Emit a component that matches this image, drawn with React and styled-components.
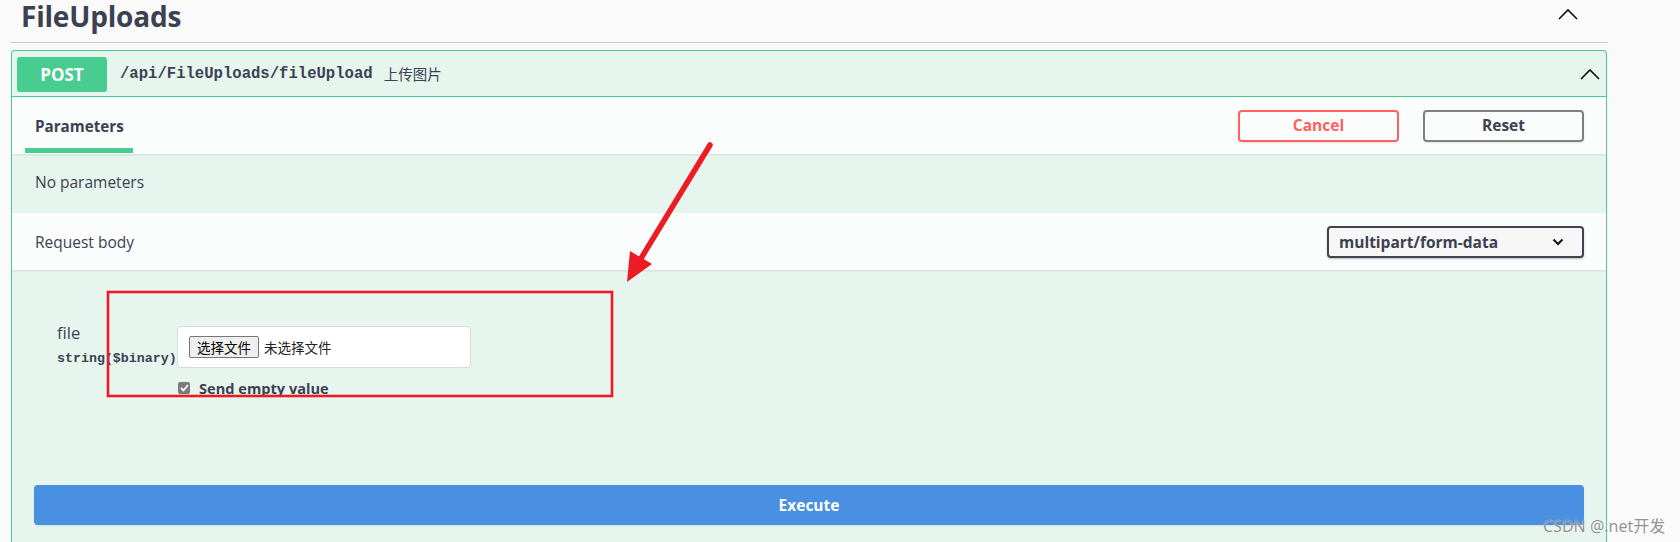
import React from 'react';
import styled, { createGlobalStyle } from 'styled-components';

const GlobalStyle = createGlobalStyle`
    html, body {
        margin: 0;
        padding: 0;
        background: #fafafa;
        font-family: "Open Sans", "Noto Sans CJK SC", sans-serif;
        color: #3b4151;
        overflow: hidden;
    }
`;

const Chevron = ({ size = 20 }) => (
    <svg width={size} height={size * 0.6} viewBox="0 0 20 12" fill="none">
        <path d="M1 11 L10 2 L19 11" stroke="#111" strokeWidth="1.6" />
    </svg>
);

const Page = styled.div`
    position: relative;
    width: 1680px;
    height: 542px;
`;

const Section = styled.div`
    width: 1598px;
    margin-left: 10px;
`;

const TitleRow = styled.div`
    height: 43px;
    border-bottom: 1px solid #c9c9c9;
    display: flex;
    align-items: flex-start;
    justify-content: space-between;
    padding: 0 30px 0 11px;
    box-sizing: border-box;

    &>h3{
        margin: 0;
        font-size: 28px;
        font-weight: 700;
        line-height: 33px;
        letter-spacing: -0.2px;
    }
    &>svg{
        margin-top: 8px;
    }
`;

const Opblock = styled.div`
    margin: 7px 1px 0 1px;
    border: 1px solid #49cc90;
    border-radius: 4px 4px 0 0;
    border-bottom: none;
    background: rgba(73, 204, 144, .1);
    height: 491px;
    overflow: hidden;
`;

const OpHeader = styled.div`
    height: 45px;
    border-bottom: 1px solid #49cc90;
    display: flex;
    align-items: center;
    padding: 0 6px 0 5px;
`;

const Method = styled.span`
    width: 90px;
    height: 35px;
    border-radius: 3px;
    background: #49cc90;
    color: #fff;
    font-weight: 700;
    font-size: 17px;
    display: flex;
    align-items: center;
    justify-content: center;
    margin-top: 1px;
`;

const Path = styled.span`
    margin-left: 13px;
    font-family: "Liberation Mono", monospace;
    font-size: 15.6px;
    font-weight: 700;
    color: #3b4151;
`;

const Summary = styled.span`
    margin-left: 11px;
    font-size: 14.5px;
    color: #3b4151;
    flex: 1;
`;

const BarRow = styled.div`
    height: ${p => p.h}px;
    box-sizing: border-box;
    display: flex;
    align-items: center;
    justify-content: space-between;
    padding: 0 22px ${p => p.pb || 0}px ${p => p.pl || 23}px;
    background: ${p => p.light ? 'rgba(255,255,255,.8)' : 'transparent'};
    box-shadow: ${p => p.light ? '0 1px 2px rgba(0,0,0,.1)' : 'none'};
    position: relative;
    font-size: 15.5px;
`;

const Tab = styled.div`
    align-self: stretch;
    padding: 0 9px 0 10px;
    display: flex;
    align-items: center;
    font-weight: 700;
    font-size: 15.2px;
    position: relative;

    &::after{
        content: '';
        position: absolute;
        left: 0;
        right: 0;
        bottom: 1px;
        height: 5px;
        background: #49cc90;
    }
`;

const Buttons = styled.div`
    display: flex;
    gap: 24px;
`;

const Btn = styled.button`
    width: 161px;
    height: 32px;
    border: 2px solid ${p => p.color};
    border-radius: 4px;
    background: transparent;
    color: ${p => p.text};
    font-family: inherit;
    font-weight: 700;
    font-size: 15.5px;
    line-height: 20px;
    padding: 0 0 2px;
    box-shadow: 0 1px 2px rgba(0,0,0,.1);
`;

const Select = styled.div`
    width: 257px;
    height: 32px;
    box-sizing: border-box;
    border: 2px solid #41444e;
    border-radius: 4px;
    background: #f7f7f7;
    box-shadow: 0 1px 2px rgba(0,0,0,.25);
    display: flex;
    align-items: center;
    justify-content: space-between;
    padding: 0 18px 0 10px;
    font-weight: 700;
    font-size: 15.5px;
`;

const Body = styled.div`
    padding: 0 22px;
`;

const ParamRow = styled.div`
    display: flex;
    margin-top: 53px;
    padding-left: 23px;
`;

const NameCol = styled.div`
    width: 120px;

    &>.name{
        font-size: 16.5px;
        line-height: 20px;
    }
    &>.type{
        margin-top: 8px;
        font-family: "Liberation Mono", monospace;
        font-size: 13.3px;
        font-weight: 700;
        line-height: 16px;
        white-space: nowrap;
    }
`;

const ValueCol = styled.div`
    padding-top: 3px;
`;

const FileBox = styled.div`
    width: 294px;
    height: 42px;
    box-sizing: border-box;
    background: #fff;
    border: 1px solid #d9d9d9;
    border-radius: 4px;
    display: flex;
    align-items: center;
    padding-left: 11px;
    font-family: "Noto Sans CJK SC", sans-serif;
    font-size: 13.5px;
    color: #222;
`;

const FileButton = styled.span`
    height: 22px;
    box-sizing: border-box;
    padding: 0 7px;
    border: 1px solid #767676;
    border-radius: 2px;
    background: #efefef;
    display: flex;
    align-items: center;
    margin-right: 5px;
    color: #000;
`;

const CheckRow = styled.label`
    display: flex;
    align-items: center;
    margin-top: 10px;
    height: 20px;
    font-weight: 700;
    font-size: 14.6px;
`;

const Check = styled.span`
    width: 12px;
    height: 12px;
    border-radius: 2px;
    background: #7b7b7b;
    display: inline-flex;
    align-items: center;
    justify-content: center;
    margin: 0 9px 0 1px;
`;

const Execute = styled.button`
    display: block;
    width: 100%;
    height: 40px;
    margin-top: 87px;
    border: none;
    border-radius: 4px;
    background: #4990e2;
    color: #fff;
    font-family: inherit;
    font-weight: 700;
    font-size: 15.5px;
    box-shadow: 0 1px 2px rgba(0,0,0,.1);
`;

const Overlay = styled.svg`
    position: absolute;
    left: 0;
    top: 0;
    pointer-events: none;
`;

const Watermark = styled.span`
    position: absolute;
    left: 1543px;
    top: 513px;
    font-family: "Noto Sans", "Noto Sans CJK SC", sans-serif;
    font-size: 16px;
    color: rgba(110, 110, 110, .75);
    text-shadow: 0 0 1px #fff;
    pointer-events: none;
`;

const App = () => (
    <Page>
        <GlobalStyle />
        <Section>
            <TitleRow>
                <h3>FileUploads</h3>
                <Chevron />
            </TitleRow>
            <Opblock>
                <OpHeader>
                    <Method>POST</Method>
                    <Path>/api/FileUploads/fileUpload</Path>
                    <Summary>上传图片</Summary>
                    <Chevron />
                </OpHeader>
                <BarRow h={57} pl={13} light>
                    <Tab>Parameters</Tab>
                    <Buttons>
                        <Btn color="#ff6060" text="#ff6060">Cancel</Btn>
                        <Btn color="#808080" text="#3b4151">Reset</Btn>
                    </Buttons>
                </BarRow>
                <BarRow h={59} pb={4}>No parameters</BarRow>
                <BarRow h={57} light>
                    <span>Request body</span>
                    <Select>
                        <span>multipart/form-data</span>
                        <svg width="12" height="8" viewBox="0 0 12 8">
                            <path d="M1.5 1.5 L6 6 L10.5 1.5" stroke="#111" strokeWidth="2" fill="none" />
                        </svg>
                    </Select>
                </BarRow>
                <Body>
                    <ParamRow>
                        <NameCol>
                            <div className="name">file</div>
                            <div className="type">string($binary)</div>
                        </NameCol>
                        <ValueCol>
                            <FileBox>
                                <FileButton>选择文件</FileButton>
                                未选择文件
                            </FileBox>
                            <CheckRow>
                                <Check>
                                    <svg width="9" height="8" viewBox="0 0 9 8">
                                        <path d="M1 4 L3.5 6.5 L8 1" stroke="#fff" strokeWidth="1.8" fill="none" />
                                    </svg>
                                </Check>
                                Send empty value
                            </CheckRow>
                        </ValueCol>
                    </ParamRow>
                    <Execute>Execute</Execute>
                </Body>
            </Opblock>
        </Section>

        <Overlay width="1680" height="542">
            <rect x="108" y="292" width="504" height="104" fill="none" stroke="#ec1c24" strokeWidth="2.6" />
            <line x1="710" y1="145" x2="640" y2="260" stroke="#ec1c24" strokeWidth="5.5" strokeLinecap="round" />
            <polygon points="627,282 630,251 652,264" fill="#ec1c24" />
        </Overlay>
        <Watermark>CSDN @.net开发</Watermark>
    </Page>
);

export default App;
